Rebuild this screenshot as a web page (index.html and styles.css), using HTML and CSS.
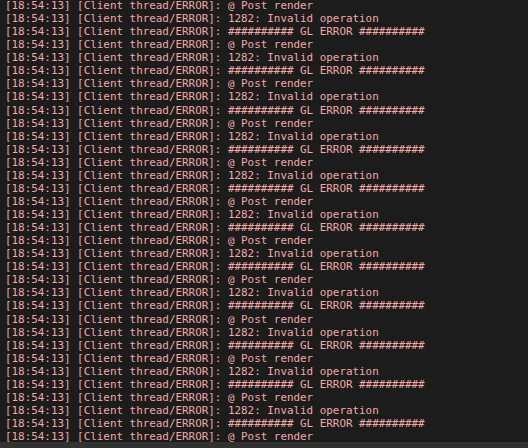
FILE: index.html
```html
<!DOCTYPE html>
<html>
<head>
<meta charset="utf-8">
<link rel="stylesheet" href="styles.css">
</head>
<body>
<div class="console">
<pre class="log" id="log"></pre>
</div>
<div class="statusbar"></div>
<script>
var msgs = ["@ Post render", "1282: Invalid operation", "########## GL ERROR ##########"];
var out = [];
for (var i = 0; i < 34; i++) {
  out.push("[18:54:13] [Client thread/ERROR]: " + msgs[i % 3]);
}
document.getElementById("log").textContent = out.join("\n");
</script>
</body>
</html>
```
FILE: styles.css
```css
html, body {
  margin: 0;
  padding: 0;
  width: 528px;
  height: 448px;
  overflow: hidden;
  background: #1e1e1e;
}
body {
  display: flex;
  flex-direction: column;
}
.console {
  flex: 1;
  overflow: hidden;
  background: #1c1c1c;
}
.log {
  margin: -1px 0 0 0;
  padding: 0 0 0 5px;
  font-family: "DejaVu Sans Mono", monospace;
  font-size: 10.9px;
  line-height: 13.06px;
  color: #f0a8a8;
  white-space: pre;
}
.statusbar {
  height: 6px;
  background: #323232;
}
```
